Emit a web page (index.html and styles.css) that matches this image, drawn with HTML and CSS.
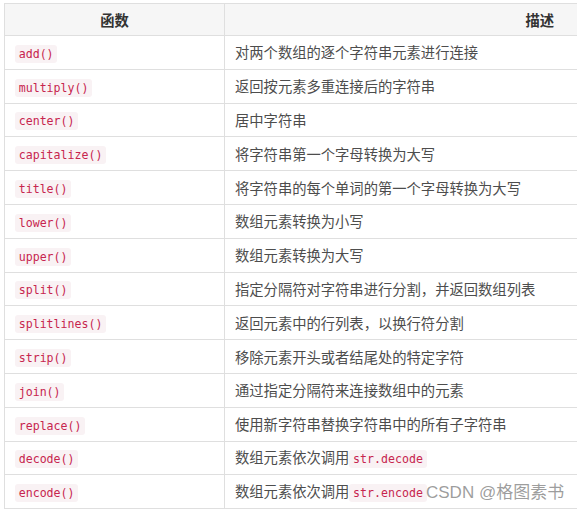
FILE: index.html
```html
<!DOCTYPE html>
<html lang="zh">
<head>
<meta charset="utf-8">
<link rel="stylesheet" href="styles.css">
</head>
<body>
<div class="wrap">
<table class="tbl">
<thead>
<tr><th class="c1">函数</th><th class="c2">描述</th></tr>
</thead>
<tbody>
<tr><td><code>add()</code></td><td>对两个数组的逐个字符串元素进行连接</td></tr>
<tr><td><code>multiply()</code></td><td>返回按元素多重连接后的字符串</td></tr>
<tr><td><code>center()</code></td><td>居中字符串</td></tr>
<tr><td><code>capitalize()</code></td><td>将字符串第一个字母转换为大写</td></tr>
<tr><td><code>title()</code></td><td>将字符串的每个单词的第一个字母转换为大写</td></tr>
<tr><td><code>lower()</code></td><td>数组元素转换为小写</td></tr>
<tr><td><code>upper()</code></td><td>数组元素转换为大写</td></tr>
<tr><td><code>split()</code></td><td>指定分隔符对字符串进行分割，并返回数组列表</td></tr>
<tr><td><code>splitlines()</code></td><td>返回元素中的行列表，以换行符分割</td></tr>
<tr><td><code>strip()</code></td><td>移除元素开头或者结尾处的特定字符</td></tr>
<tr><td><code>join()</code></td><td>通过指定分隔符来连接数组中的元素</td></tr>
<tr><td><code>replace()</code></td><td>使用新字符串替换字符串中的所有子字符串</td></tr>
<tr><td><code>decode()</code></td><td>数组元素依次调用<code>str.decode</code></td></tr>
<tr><td><code>encode()</code></td><td>数组元素依次调用<code>str.encode</code></td></tr>
</tbody>
</table>
<div class="wm">CSDN @格图素书</div>
</div>
</body>
</html>
```
FILE: styles.css
```css
html, body {
  margin: 0;
  padding: 0;
  overflow: hidden;
  background: #fff;
}
.wrap {
  position: relative;
  padding: 3px 0 0 4px;
  width: 600px;
}
.tbl {
  border-collapse: collapse;
  width: 578px;
  font-family: "Noto Sans CJK SC", "Noto Sans", sans-serif;
  font-size: 14.3px;
  color: #4d4d4d;
}
.tbl th, .tbl td {
  border: 1px solid #dfdfdf;
  padding: 0 10px;
  line-height: 20px;
}
.tbl th {
  background: #f6f6f6;
  height: 31px;
  font-weight: bold;
  color: #333;
  font-size: 14.3px;
}
.tbl th.c1 {
  text-align: center;
  width: 199px;
}
.tbl th.c2 {
  text-align: right;
  padding-right: 27px;
}
.tbl td {
  height: 32.8px;
  text-align: left;
  white-space: nowrap;
}
code {
  font-family: "DejaVu Sans Mono", "Liberation Mono", monospace;
  font-size: 11.6px;
  color: #c7254e;
  background: #f9f2f4;
  border-radius: 3px;
  padding: 2px 3.7px;
  line-height: 14px;
  display: inline-block;
}
.wm {
  position: absolute;
  left: 426px;
  top: 481px;
  font-family: "Liberation Sans", "Noto Sans CJK SC", sans-serif;
  font-size: 17px;
  color: rgba(140, 140, 140, 0.85);
  line-height: 24px;
  white-space: nowrap;
}
```
